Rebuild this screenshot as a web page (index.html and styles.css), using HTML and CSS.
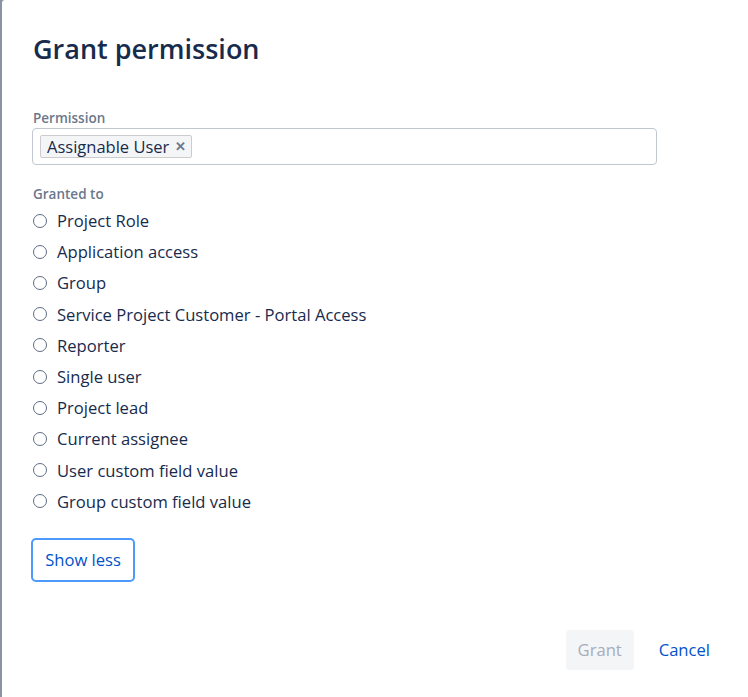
FILE: index.html
```html
<!DOCTYPE html>
<html>
<head>
<meta charset="utf-8">
<link rel="stylesheet" href="styles.css">
</head>
<body>
<div class="backdrop">
  <div class="modal">
    <h1 class="title">Grant permission</h1>
    <div class="field">
      <label class="label">Permission</label>
      <div class="select">
        <span class="tag">Assignable User <span class="tag-x">✕</span></span>
      </div>
    </div>
    <div class="field granted">
      <div class="label">Granted to</div>
      <ul class="radios">
        <li><span class="radio"></span>Project Role</li>
        <li><span class="radio"></span>Application access</li>
        <li><span class="radio"></span>Group</li>
        <li><span class="radio"></span>Service Project Customer - Portal Access</li>
        <li><span class="radio"></span>Reporter</li>
        <li><span class="radio"></span>Single user</li>
        <li><span class="radio"></span>Project lead</li>
        <li><span class="radio"></span>Current assignee</li>
        <li><span class="radio"></span>User custom field value</li>
        <li><span class="radio"></span>Group custom field value</li>
      </ul>
    </div>
    <button class="show-less">Show less</button>
    <div class="footer">
      <button class="grant">Grant</button>
      <button class="cancel">Cancel</button>
    </div>
  </div>
</div>
</body>
</html>
```

FILE: styles.css
```css
html, body {
  margin: 0;
  padding: 0;
  background: #8993a4;
  height: 100%;
}
body {
  font-family: "Open Sans", "Noto Sans", sans-serif;
  color: #172b4d;
}
.backdrop {
  height: 697px;
  padding-left: 2px;
  box-sizing: border-box;
}
.modal {
  background: #fff;
  height: 100%;
  border-top-left-radius: 3px;
  padding: 30px 0 0 31px;
  box-sizing: border-box;
  display: flex;
  flex-direction: column;
}
.title {
  margin: 0;
  font-size: 27px;
  font-weight: 600;
  line-height: 38px;
  color: #172b4d;
}
.field {
  margin-top: 40px;
  display: flex;
  flex-direction: column;
}
.label {
  font-size: 13.5px;
  font-weight: 600;
  color: #6b778c;
  line-height: 20px;
}
.select {
  width: 625px;
  height: 37px;
  box-sizing: border-box;
  border: 1px solid #c1c7d0;
  border-radius: 4px;
  padding: 6px 7px;
  margin-left: -1px;
}
.tag {
  display: inline-flex;
  align-items: center;
  height: 23px;
  box-sizing: border-box;
  border: 1px solid #ccc;
  background: #f4f5f7;
  border-radius: 2px;
  padding: 0 5px 0 6px;
  font-size: 16.5px;
  color: #172b4d;
}
.tag-x {
  font-size: 12.5px;
  font-weight: 700;
  color: #6b778c;
  margin-left: 6px;
}
.granted {
  margin-top: 19px;
}
.radios {
  list-style: none;
  margin: 0;
  padding: 1px 0 0;
}
.radios li {
  display: flex;
  align-items: center;
  height: 31.2px;
  font-size: 16.6px;
}
.radio {
  width: 12px;
  height: 12px;
  border: 1px solid #5e6c84;
  border-radius: 50%;
  margin: 0 10px 0 0;
  flex-shrink: 0;
}
.show-less {
  align-self: flex-start;
  margin-top: 21px;
  margin-left: -2px;
  height: 44px;
  width: 104px;
  padding: 0;
  border: 2px solid #4c9aff;
  border-radius: 5px;
  background: #fff;
  color: #0052cc;
  font-family: inherit;
  font-size: 16.6px;
}
.footer {
  display: flex;
  justify-content: flex-end;
  align-items: center;
  margin-top: 48px;
  padding-right: 26px;
  gap: 13px;
}
.grant {
  height: 40px;
  width: 68px;
  border: none;
  border-radius: 4px;
  background: #f4f5f7;
  color: #a5adba;
  font-family: inherit;
  font-size: 16.6px;
}
.cancel {
  height: 40px;
  border: none;
  background: transparent;
  color: #0052cc;
  font-family: inherit;
  font-size: 16.6px;
  padding: 0 12px;
}
```
